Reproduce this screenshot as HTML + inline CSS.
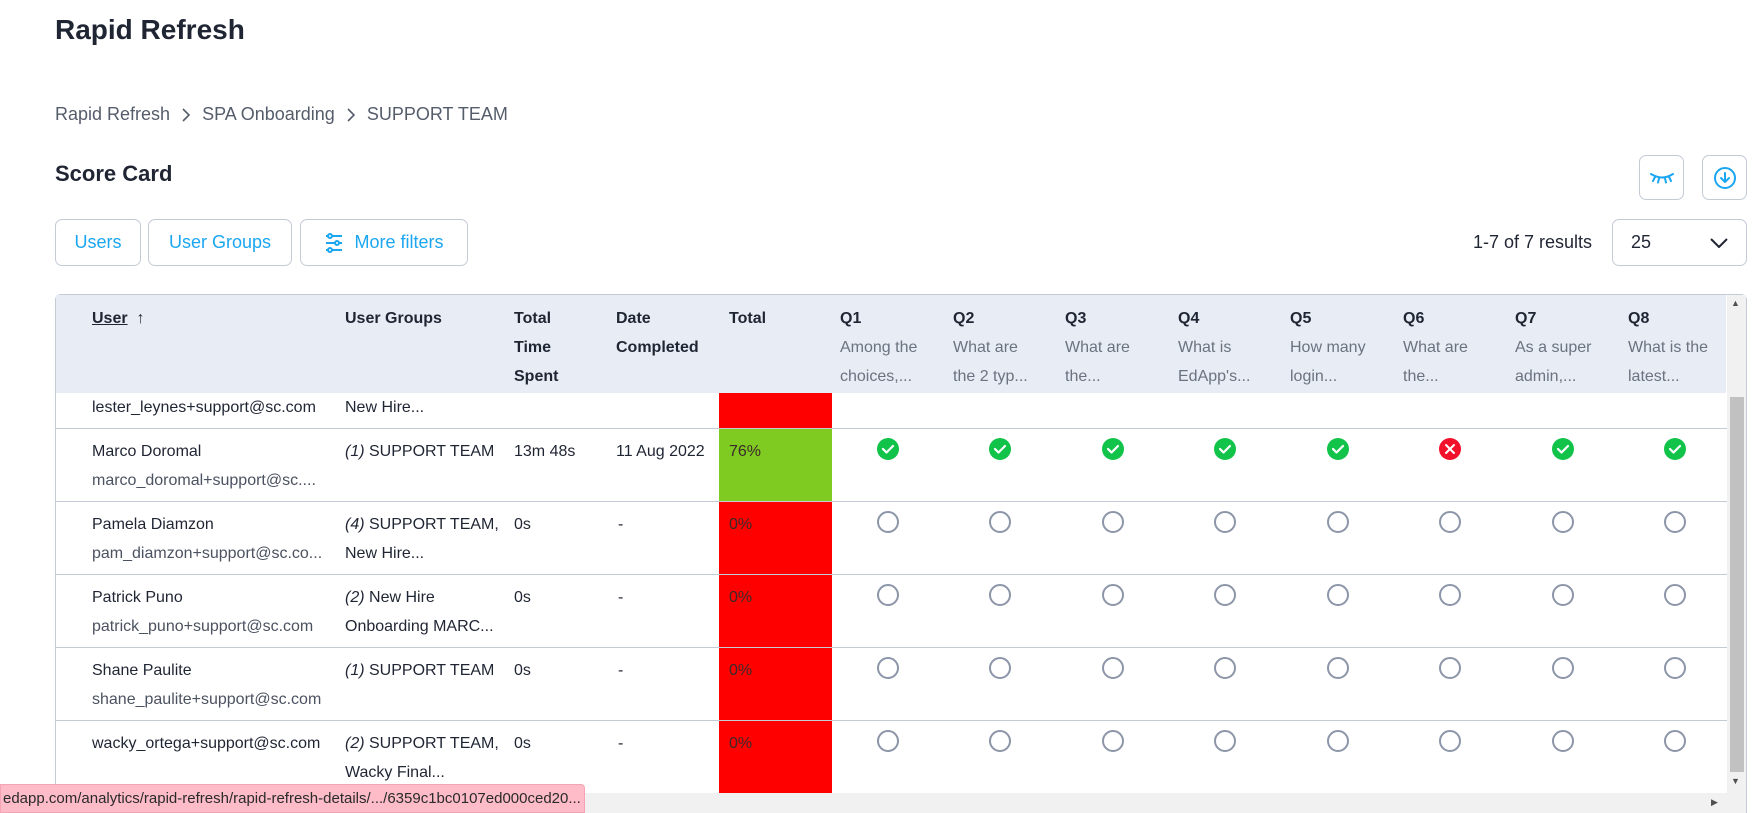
<!DOCTYPE html>
<html><head><meta charset="utf-8"><style>
*{box-sizing:border-box;margin:0;padding:0}
body{width:1764px;height:813px;overflow:hidden;background:#fff;font-family:"Liberation Sans",sans-serif;color:#1f2533;position:relative}
.a{position:absolute;white-space:nowrap}
.btn{position:absolute;border:1px solid #c4cad6;border-radius:7px;background:#fff;color:#1aa6f0;font-size:18px;display:flex;align-items:center;justify-content:center}
.hdr{position:absolute;left:56px;top:295px;width:1670px;height:98px;background:#e8ecf4}
.ht{position:absolute;font-size:16px;font-weight:bold;line-height:29px;color:#1f2533}
.hs{font-weight:normal;color:#6b7280}
.line{position:absolute;left:56px;width:1670px;height:1px;background:#c4cad6}
.c{position:absolute;font-size:16px;line-height:29px;white-space:nowrap;color:#1f2533}
.cell{position:absolute;left:719px;width:113px;font-size:16px;padding:14px 10px;color:#3a2a2a}
.chev{display:inline-block;vertical-align:middle;margin:0 12px}
</style></head><body>
<div class="a" style="left:55px;top:14px;font-size:28px;font-weight:bold">Rapid Refresh</div>
<div class="a" style="left:55px;top:104px;font-size:18px;color:#555d6b">Rapid Refresh<svg class="chev" width="8" height="14" viewBox="0 0 8 14" fill="none" stroke="#555d6b" stroke-width="1.6"><path d="M1 1l6 6-6 6"/></svg>SPA Onboarding<svg class="chev" width="8" height="14" viewBox="0 0 8 14" fill="none" stroke="#555d6b" stroke-width="1.6"><path d="M1 1l6 6-6 6"/></svg>SUPPORT TEAM</div>
<div class="a" style="left:55px;top:161px;font-size:22px;font-weight:bold">Score Card</div>

<div class="btn" style="left:1639px;top:155px;width:45px;height:45px"><svg width="26" height="14" viewBox="0 0 26 14" fill="none" stroke="#1aa6f0" stroke-width="2" stroke-linecap="round"><path d="M2 3Q13 10 24 3M6 6l-2 4M10 7.5l-1 4M16 7.5l1 4M20 6l2 4"/></svg></div>
<div class="btn" style="left:1702px;top:155px;width:45px;height:45px"><svg width="24" height="24" viewBox="0 0 24 24" fill="none" stroke="#1aa6f0" stroke-width="2" stroke-linecap="round" stroke-linejoin="round"><circle cx="12" cy="12" r="10"/><path d="M12 7v9M8 12l4 4 4-4"/></svg></div>

<div class="btn" style="left:55px;top:219px;width:86px;height:47px">Users</div>
<div class="btn" style="left:148px;top:219px;width:144px;height:47px">User Groups</div>
<div class="btn" style="left:300px;top:219px;width:168px;height:47px"><svg width="20" height="22" viewBox="0 0 20 22" fill="none" stroke="#1aa6f0" stroke-width="2" style="margin-right:10px"><path d="M2 4h16M2 11h16M2 18h16"/><circle cx="6" cy="4" r="2" fill="#fff"/><circle cx="13" cy="11" r="2" fill="#fff"/><circle cx="6" cy="18" r="2" fill="#fff"/></svg>More filters</div>

<div class="a" style="left:1473px;top:232px;font-size:18px;color:#1f2533">1-7 of 7 results</div>
<div class="btn" style="left:1612px;top:219px;width:135px;height:47px;justify-content:space-between;padding:0 18px;color:#1f2533"><span>25</span><svg width="18" height="10" viewBox="0 0 18 10" fill="none" stroke="#1f2533" stroke-width="2"><path d="M1 1l8 8 8-8"/></svg></div>

<div style="position:absolute;left:55px;top:294px;width:1692px;height:519px;border:1px solid #c4cad6;border-bottom:none;border-radius:6px 6px 0 0;overflow:hidden"></div>
<div class="hdr"></div>
<div class="ht" style="left:92px;top:304px"><span style="text-decoration:underline">User</span> &nbsp;&#x2191;</div>
<div class="ht" style="left:345px;top:304px">User Groups</div>
<div class="ht" style="left:514px;top:304px">Total<br>Time<br>Spent</div>
<div class="ht" style="left:616px;top:304px">Date<br>Completed</div>
<div class="ht" style="left:729px;top:304px">Total</div>
<div class="ht" style="left:840px;top:304px">Q1<br><span class="hs">Among the<br>choices,...</span></div>
<div class="ht" style="left:953px;top:304px">Q2<br><span class="hs">What are<br>the 2 typ...</span></div>
<div class="ht" style="left:1065px;top:304px">Q3<br><span class="hs">What are<br>the...</span></div>
<div class="ht" style="left:1178px;top:304px">Q4<br><span class="hs">What is<br>EdApp's...</span></div>
<div class="ht" style="left:1290px;top:304px">Q5<br><span class="hs">How many<br>login...</span></div>
<div class="ht" style="left:1403px;top:304px">Q6<br><span class="hs">What are<br>the...</span></div>
<div class="ht" style="left:1515px;top:304px">Q7<br><span class="hs">As a super<br>admin,...</span></div>
<div class="ht" style="left:1628px;top:304px">Q8<br><span class="hs">What is the<br>latest...</span></div>

<div style="position:absolute;left:1727px;top:295px;width:19px;height:498px;background:#f1f1f1"></div>
<div style="position:absolute;left:1730px;top:397px;width:14px;height:375px;background:#c1c1c1"></div>
<div class="a" style="left:1731px;top:298px;font-size:9px;color:#505050">&#9650;</div>
<div class="a" style="left:1731px;top:776px;font-size:9px;color:#505050">&#9660;</div>
<div style="position:absolute;left:56px;top:793px;width:1690px;height:20px;background:#f1f1f1"></div>
<div class="a" style="left:1711px;top:797px;font-size:9px;color:#505050">&#9654;</div>

<div class="c" style="left:92px;top:393px">lester_leynes+support@sc.com</div>
<div class="c" style="left:345px;top:393px">New Hire...</div>
<div class="cell" style="top:393px;height:35px;background:#ff0000"></div>
<div class="line" style="top:428px;width:1671px"></div>

<div class="c" style="left:92px;top:437px">Marco Doromal<br><span style="color:#4b5260">marco_doromal+support@sc....</span></div>
<div class="c" style="left:345px;top:437px"><i>(1)</i> SUPPORT TEAM</div>
<div class="c" style="left:514px;top:437px">13m 48s</div>
<div class="c" style="left:616px;top:437px">11 Aug 2022</div>
<div class="cell" style="top:429px;height:72px;background:#7fcb22">76%</div>
<div class="line" style="top:501px;width:1671px"></div>

<div class="c" style="left:92px;top:510px">Pamela Diamzon<br><span style="color:#4b5260">pam_diamzon+support@sc.co...</span></div>
<div class="c" style="left:345px;top:510px"><i>(4)</i> SUPPORT TEAM,<br>New Hire...</div>
<div class="c" style="left:514px;top:510px">0s</div>
<div class="c" style="left:618px;top:510px">-</div>
<div class="cell" style="top:502px;height:72px;background:#ff0000">0%</div>
<div class="line" style="top:574px;width:1671px"></div>

<div class="c" style="left:92px;top:583px">Patrick Puno<br><span style="color:#4b5260">patrick_puno+support@sc.com</span></div>
<div class="c" style="left:345px;top:583px"><i>(2)</i> New Hire<br>Onboarding MARC...</div>
<div class="c" style="left:514px;top:583px">0s</div>
<div class="c" style="left:618px;top:583px">-</div>
<div class="cell" style="top:575px;height:72px;background:#ff0000">0%</div>
<div class="line" style="top:647px;width:1671px"></div>

<div class="c" style="left:92px;top:656px">Shane Paulite<br><span style="color:#4b5260">shane_paulite+support@sc.com</span></div>
<div class="c" style="left:345px;top:656px"><i>(1)</i> SUPPORT TEAM</div>
<div class="c" style="left:514px;top:656px">0s</div>
<div class="c" style="left:618px;top:656px">-</div>
<div class="cell" style="top:648px;height:72px;background:#ff0000">0%</div>
<div class="line" style="top:720px;width:1671px"></div>

<div class="c" style="left:92px;top:729px">wacky_ortega+support@sc.com</div>
<div class="c" style="left:345px;top:729px"><i>(2)</i> SUPPORT TEAM,<br>Wacky Final...</div>
<div class="c" style="left:514px;top:729px">0s</div>
<div class="c" style="left:618px;top:729px">-</div>
<div class="cell" style="top:721px;height:72px;background:#ff0000">0%</div>

<svg class="a" style="left:0;top:0" width="1764" height="813">
<defs>
<g id="ok"><circle r="11" fill="#12c34a"/><path d="M-5 0l3.5 3.5 6.5-6.5" stroke="#fff" stroke-width="2.2" fill="none" stroke-linecap="round" stroke-linejoin="round"/></g>
<g id="no"><circle r="11" fill="#f2112a"/><path d="M-4-4l8 8M4-4l-8 8" stroke="#fff" stroke-width="2" stroke-linecap="round"/></g>
<g id="em"><circle r="10" fill="none" stroke="#8c96a8" stroke-width="2"/></g>
</defs>
<use href="#ok" x="888" y="449"/><use href="#ok" x="1000" y="449"/><use href="#ok" x="1113" y="449"/><use href="#ok" x="1225" y="449"/><use href="#ok" x="1338" y="449"/><use href="#no" x="1450" y="449"/><use href="#ok" x="1563" y="449"/><use href="#ok" x="1675" y="449"/>
<g id="r1"><use href="#em" x="888" y="522"/><use href="#em" x="1000" y="522"/><use href="#em" x="1113" y="522"/><use href="#em" x="1225" y="522"/><use href="#em" x="1338" y="522"/><use href="#em" x="1450" y="522"/><use href="#em" x="1563" y="522"/><use href="#em" x="1675" y="522"/></g>
<use href="#r1" y="73"/><use href="#r1" y="146"/><use href="#r1" y="219"/>
</svg>

<div class="a" style="left:0;top:784px;width:585px;height:29px;background:#fdbcc7;border:1px solid #f4a4b2;border-radius:0 4px 0 0;font-size:15px;line-height:27px;padding-left:2px;color:#2a2a2a;overflow:hidden">edapp.com/analytics/rapid-refresh/rapid-refresh-details/.../6359c1bc0107ed000ced20...</div>
</body></html>
